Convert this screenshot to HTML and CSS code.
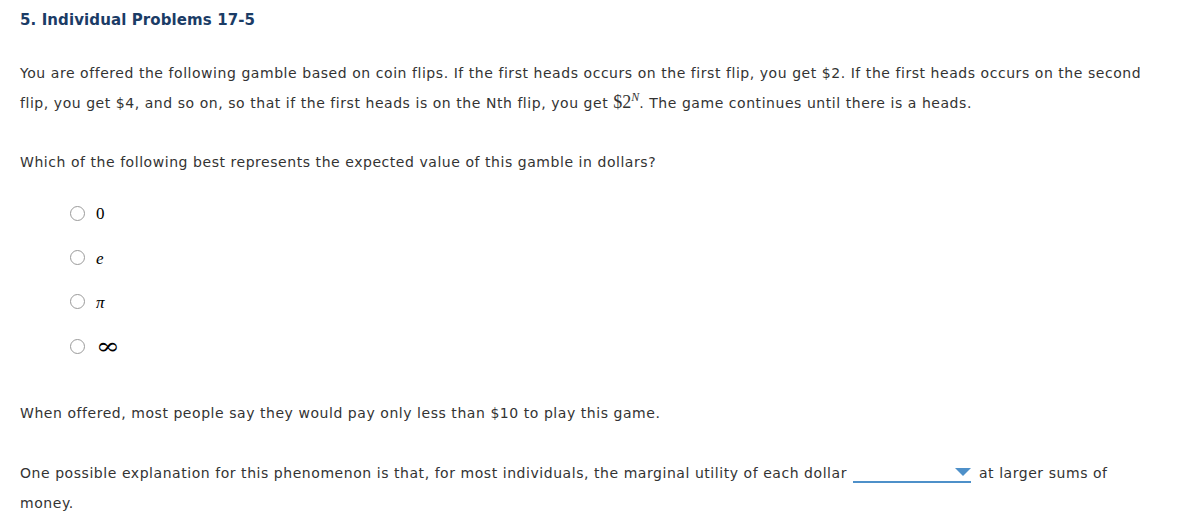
FILE: index.html
```html
<!DOCTYPE html>
<html>
<head>
<meta charset="utf-8">
<link rel="stylesheet" href="styles.css">
</head>
<body>
<div class="page">
  <h2 class="title">5. Individual Problems 17-5</h2>
  <p class="para intro">You are offered the following gamble based on coin flips. If the first heads occurs on the first flip, you get $2. If the first heads occurs on the second flip, you get $4, and so on, so that if the first heads is on the Nth flip, you get <span class="math">$2<sup class="sup">N</sup></span>. The game continues until there is a heads.</p>
  <p class="para q">Which of the following best represents the expected value of this gamble in dollars?</p>
  <ul class="options">
    <li class="opt"><span class="radio"></span><span class="mval">0</span></li>
    <li class="opt"><span class="radio"></span><span class="mval ital">e</span></li>
    <li class="opt"><span class="radio"></span><span class="mval ital">π</span></li>
    <li class="opt"><span class="radio"></span><span class="mval inf">∞</span></li>
  </ul>
  <p class="para offered">When offered, most people say they would pay only less than $10 to play this game.</p>
  <p class="para expl">One possible explanation for this phenomenon is that, for most individuals, the marginal utility of each dollar <span class="select"><span class="caret"></span></span> at larger sums of money.</p>
</div>
</body>
</html>
```

FILE: styles.css
```css
html, body {
  margin: 0;
  padding: 0;
  background: #fff;
}
.page {
  padding: 10px 50px 0 20px;
  font-family: "DejaVu Sans", Verdana, sans-serif;
  font-size: 14px;
  letter-spacing: 0.55px;
  color: #333;
}
.title {
  margin: 0;
  font-size: 15px;
  letter-spacing: 0.1px;
  font-weight: bold;
  color: #1b3c66;
  line-height: 20px;
}
.para {
  margin: 0;
  line-height: 30px;
}
.intro { margin-top: 28px; }
.q { margin-top: 29px; }
.math {
  font-family: "Liberation Serif", "DejaVu Serif", serif;
  font-size: 18px;
  line-height: 1;
  letter-spacing: 0;
}
.sup {
  font-style: italic;
  font-size: 12px;
  vertical-align: 7px;
  line-height: 0;
}
.options {
  list-style: none;
  margin: 14px 0 0 0;
  padding: 0 0 0 50px;
}
.opt {
  display: flex;
  align-items: center;
  height: 44.4px;
  gap: 11px;
}
.radio {
  width: 15px;
  height: 15px;
  border: 1px solid #9a9a9a;
  border-radius: 50%;
  box-sizing: border-box;
  background: #fff;
  flex: none;
}
.mval {
  font-family: "Liberation Serif", "DejaVu Serif", serif;
  font-size: 17px;
  letter-spacing: 0;
  color: #000;
  padding-top: 2px;
}
.ital { font-style: italic; }
.inf {
  font-family: "DejaVu Serif", serif;
  font-size: 23px;
  display: inline-block;
  transform: scaleX(1.25);
  transform-origin: left center;
  padding-top: 0;
}
.offered { margin-top: 29px; }
.expl { margin-top: 30px; }
.select {
  display: inline-block;
  position: relative;
  width: 118px;
  height: 16px;
  border-bottom: 2px solid #4e90c9;
  vertical-align: -5px;
  margin: 0 3px 0 1px;
}
.caret {
  position: absolute;
  right: 0;
  top: 3px;
  width: 0;
  height: 0;
  border-left: 8px solid transparent;
  border-right: 8px solid transparent;
  border-top: 8px solid #4e90c9;
}
```
